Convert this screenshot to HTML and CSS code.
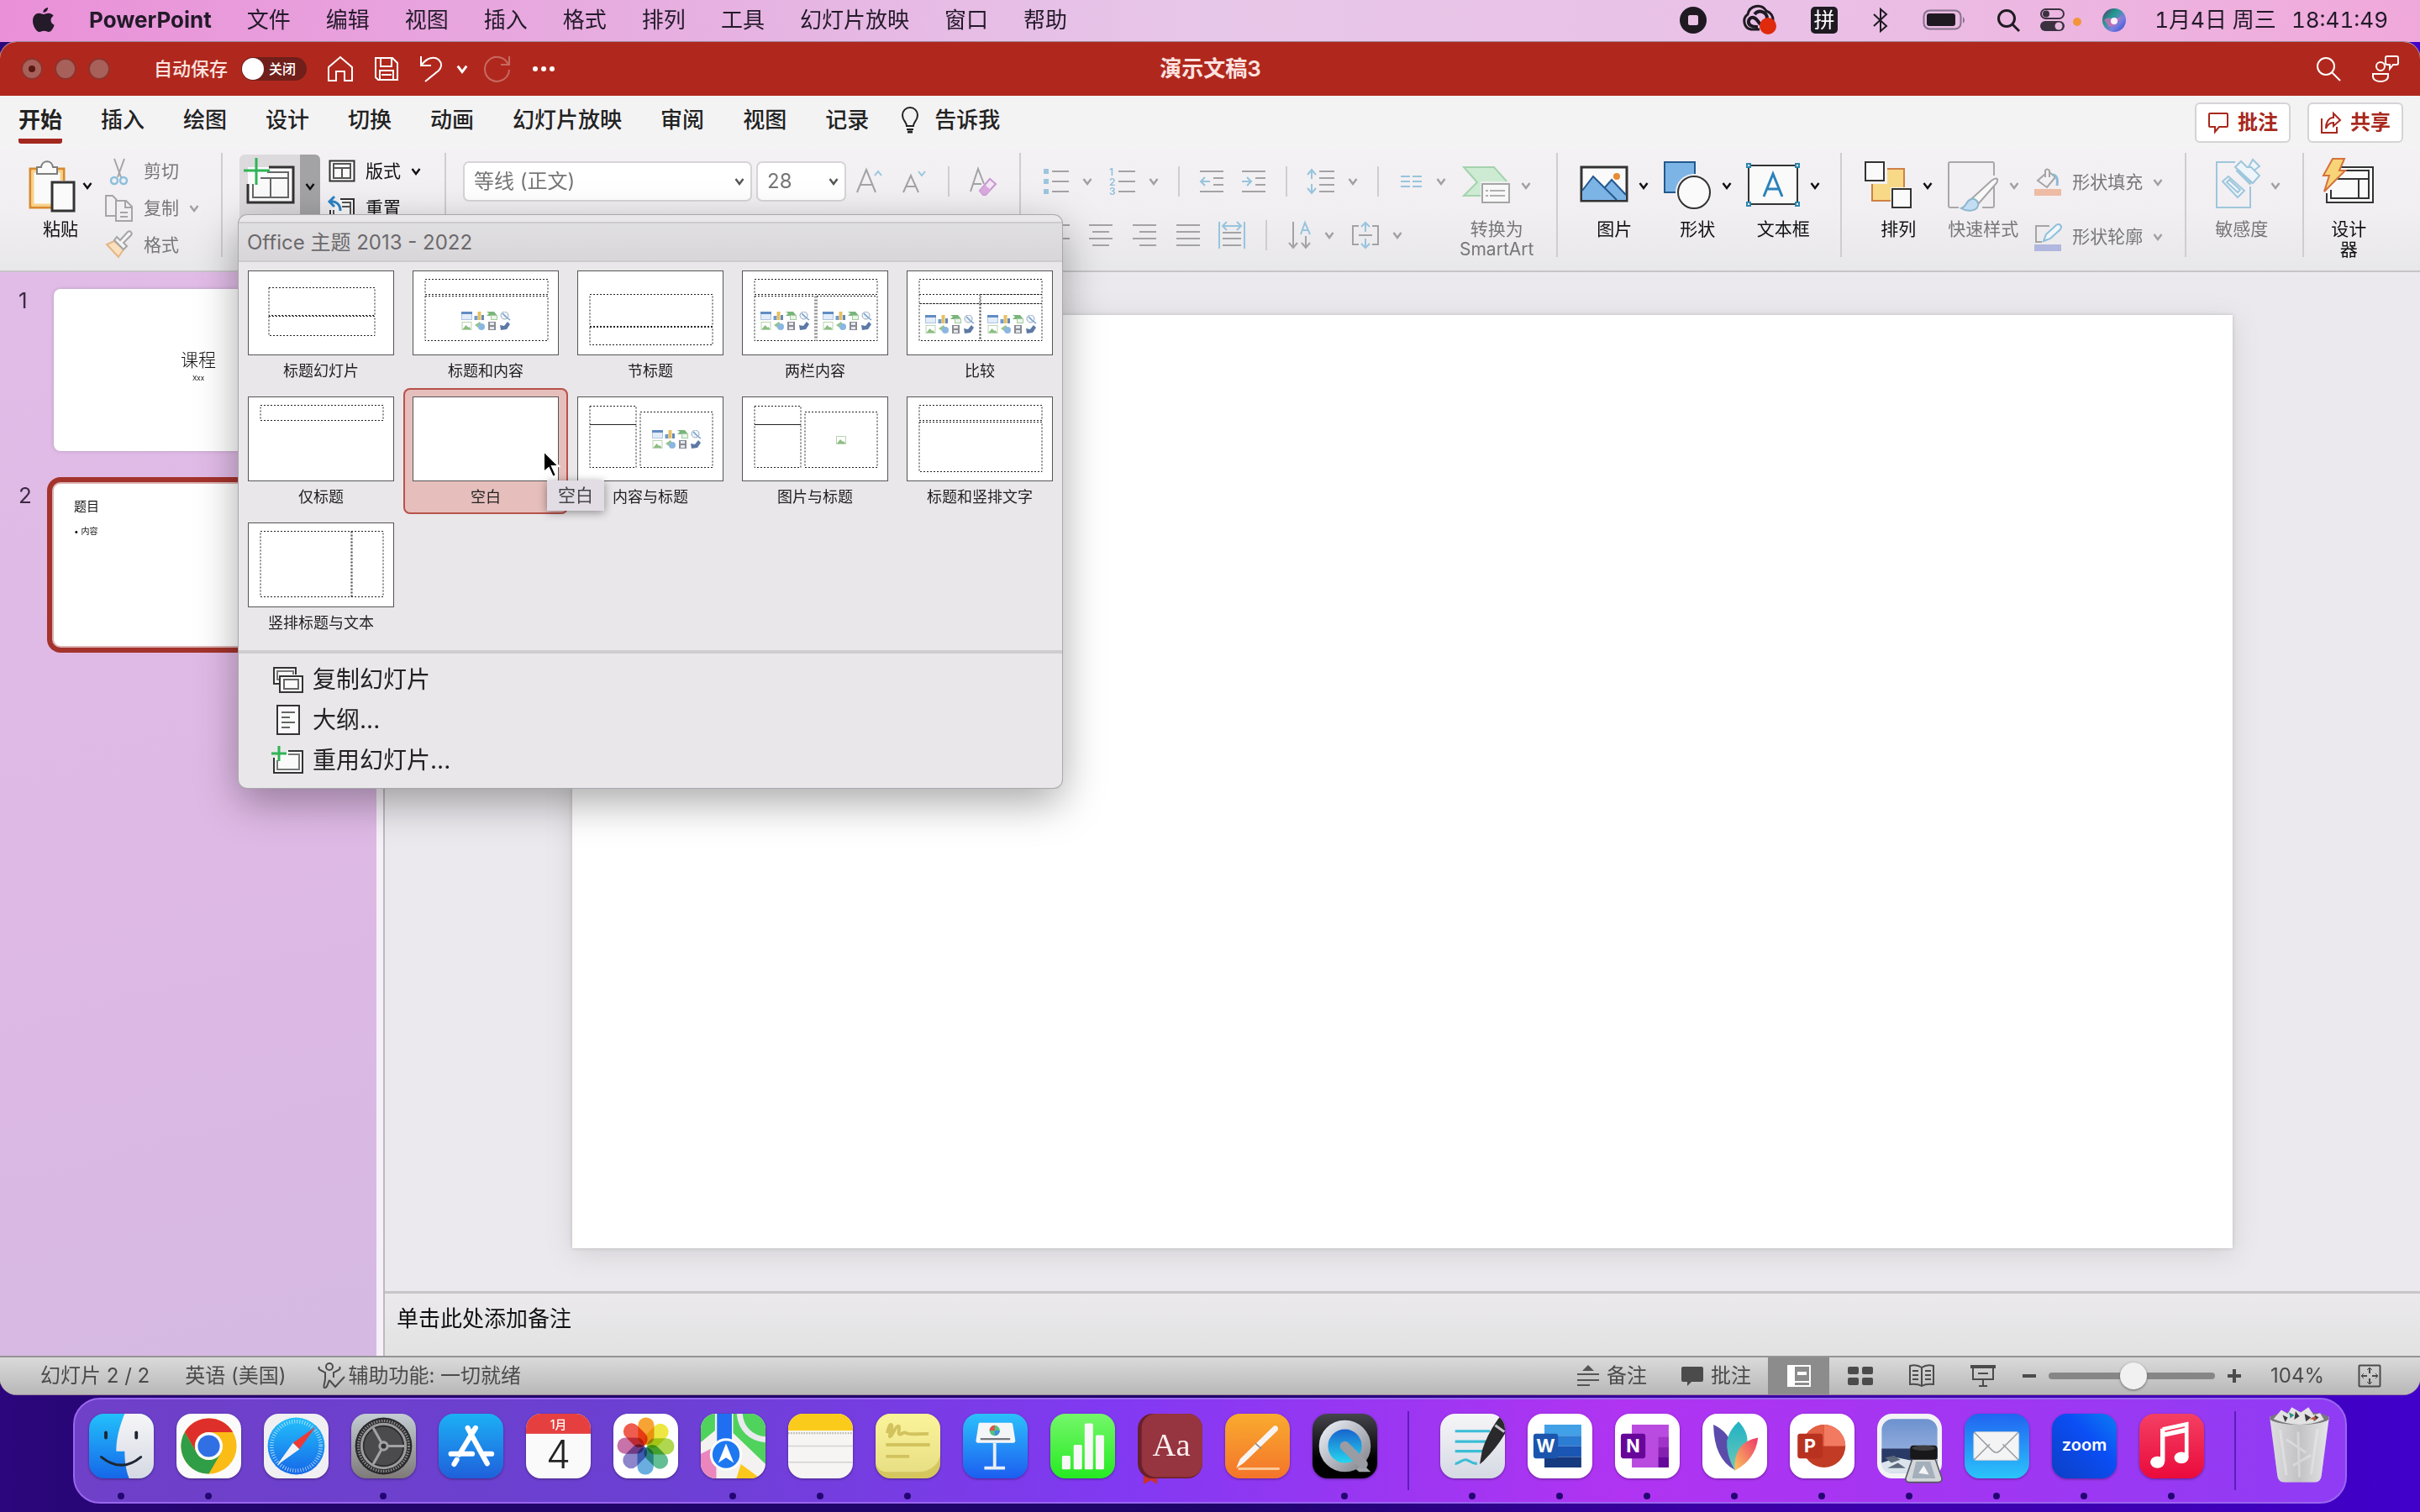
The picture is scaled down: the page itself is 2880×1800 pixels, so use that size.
FILE: index.html
```html
<!DOCTYPE html>
<html lang="zh-CN">
<head>
	<meta charset="UTF-8">
	<meta name="viewport" content="width=device-width, initial-scale=1.0">
	<title>演示文稿3</title>
	<link rel="stylesheet" href="styles.css">
</head>
<body>

<!-- shared symbols -->
<svg class="defs" width="0" height="0" aria-hidden="true">
	<symbol id="chev" viewBox="0 0 12 12"><path d="M1.500 3L6 9L10.500 3" fill="none" stroke="currentColor" stroke-width="2.500"/></symbol>
	<symbol id="pic" viewBox="0 0 12 10"><rect x=".5" y=".5" width="11" height="9" fill="#fff" stroke="#a9c9a0"/><path d="M1 9l4-5 3 3 1-1 2 3z" fill="#6fae63"/></symbol>
	<symbol id="media" viewBox="0 0 60 22">
		<rect x=".5" y=".5" width="12" height="9" fill="#dce9f8" stroke="#9db7d8"/><path d="M0 1.500h13" stroke="#3a70b4" stroke-width="3"/>
		<path d="M17.500 10V5" stroke="#4b80c4" stroke-width="4"/><path d="M21.500 10V0" stroke="#e2b13c" stroke-width="4"/><path d="M25.500 10V4" stroke="#3e6ea8" stroke-width="3"/>
		<path d="M30 0h9l4 5H30l3-3z" fill="#58a35b"/><rect x="35.500" y="4.500" width="7" height="5" fill="#e6f3e4" stroke="#8fbf8a"/>
		<circle cx="51.500" cy="4.500" r="4.500" fill="#edf3fa" stroke="#7f8ea5"/><path d="M49 2l5 5M54 7l4 3" stroke="#4c84c0" stroke-width="1.500"/>
		<use href="#pic" x="0" y="12" width="13" height="10"/>
		<path d="M16 16l6-4 3 5-5 2z" fill="#7cb56d"/><circle cx="24" cy="18" r="4" fill="#6ea6dc"/>
		<rect x="32" y="12" width="9" height="10" fill="#6d6f78"/><path d="M34 13h5v3h-5zM34 18h5v3h-5z" fill="#dfe3ea"/>
		<path d="M46 16l5 1 4-5 3 3-4 6-7 1z" fill="#35588f"/>
	</symbol>
</svg>

<header class="menubar">
	<svg class="apple" width="28" height="32" viewBox="0 0 28 32"><path d="M19 1c.3 3-2.500 6-5.500 6C13 4 16 1.300 19 1zM14 9c1.500 0 3-1.500 6-1.300 2.500.1 4.500 1.300 5.600 3-4.600 3-3.800 9 1 11C25.500 25.500 23 30 20 30c-2 0-3-1.200-5.500-1.200S11 30 9 30C5 30 1 22.500 1 17c0-6 3.500-9.300 7.500-9.300C11 7.700 12.500 9 14 9z" fill="#231a2a"/></svg>
	<nav class="menus">
		<a class="app-name" href="#">PowerPoint</a>
		<a href="#">文件</a><a href="#">编辑</a><a href="#">视图</a><a href="#">插入</a><a href="#">格式</a><a href="#">排列</a><a href="#">工具</a><a href="#">幻灯片放映</a><a href="#">窗口</a><a href="#">帮助</a>
	</nav>
	<div class="extras">
		<svg width="34" height="34" viewBox="0 0 34 34"><circle cx="17" cy="17" r="16" fill="#1f1a22"/><rect x="11" y="11" width="12" height="12" rx="2" fill="#eac2e6"/></svg>
		<svg width="42" height="34" viewBox="0 0 42 34"><g fill="none" stroke="#1f1a22" stroke-width="3"><path d="M22 28H12A10 10 0 0 1 8 10 12 12 0 0 1 30 6 11 11 0 0 1 38 18"/><path d="M20 25C4 26 8 12 15 14c4 1 5 5 8 8M16 10c6-7 15-2 15 5" stroke-width="4"/></g><circle cx="32" cy="24" r="10" fill="#df2a0c"/></svg>
		<svg width="34" height="34" viewBox="0 0 34 34"><rect x="1" y="1" width="32" height="32" rx="5" fill="#1f1a22"/><text x="17" y="26" font-size="25" text-anchor="middle" fill="#fff">拼</text></svg>
		<svg width="20" height="30" viewBox="0 0 20 30"><path d="M2 8l15 14-7 6V2l7 6L2 22" fill="none" stroke="#1f1a22" stroke-width="2"/></svg>
		<svg width="52" height="26" viewBox="0 0 52 26"><rect x="1.500" y="1.500" width="44" height="22" rx="7" fill="none" stroke="#86708b" stroke-width="2"/><rect x="5" y="5" width="34" height="15" rx="3" fill="#1f1a22"/><path d="M48 9q4 4 0 8z" fill="#86708b"/></svg>
		<div class="controls">
			<svg width="28" height="28" viewBox="0 0 28 28"><g fill="none" stroke="#1f1a22" stroke-width="3"><circle cx="12" cy="12" r="9.500"/><path d="M19 19l8 8"/></g></svg>
			<svg width="50" height="28" viewBox="0 0 50 28"><rect x="1" y="1" width="27" height="11" rx="5.500" fill="none" stroke="#3b3140" stroke-width="2"/><circle cx="7" cy="6.500" r="4" fill="#3b3140"/><rect x="0" y="15" width="29" height="12" rx="6" fill="#3b3140"/><circle cx="22" cy="21" r="4.500" fill="#e8badf"/><circle cx="44" cy="16" r="5" fill="#f2953a"/></svg>
			<svg width="28" height="28" viewBox="0 0 28 28"><defs><linearGradient id="siri" x1="0" y1="0" x2="1" y2="1"><stop offset="0" stop-color="#5c2b6e"/><stop offset=".35" stop-color="#1f9b8d"/><stop offset=".65" stop-color="#7c7fe0"/><stop offset="1" stop-color="#274ad0"/></linearGradient></defs><circle cx="14" cy="14" r="14" fill="url(#siri)"/><path d="M2 14c8-7 12 4 22-6-6 9-8 14-16 14z" fill="#e868b8" opacity=".7"/><circle cx="14" cy="15" r="4" fill="#fff" opacity=".9"/></svg>
		</div>
		<span class="clock"><span>1月4日 周三</span><span>18:41:49</span></span>
	</div>
</header>

<main class="window">
	<div class="titlebar">
		<div class="title-left">
			<span class="lights"><i class="dirty"></i><i></i><i></i></span>
			<label class="autosave">自动保存 <button class="toggle"><span>关闭</span></button></label>
			<button aria-label="主页"><svg width="32" height="32" viewBox="0 0 32 32"><path d="M2 14L16 2l14 12v16h-9V19h-10v11H2z" class="wl"/></svg></button>
			<button aria-label="保存"><svg width="30" height="30" viewBox="0 0 30 30"><path d="M2 2h20l6 6v20H5l-3-3zM8 2v10h13V2M7 28V17h16v11M9 22h12" class="wl"/></svg></button>
			<button class="undo" aria-label="撤消"><svg width="28" height="32" viewBox="0 0 28 32"><path d="M2 1v11h12M2 12C9 2 18 1 23 5c5 5 3 10 0 13L7 31" class="wl"/></svg><svg class="chev" width="14" height="14"><use href="#chev"/></svg></button>
			<button class="faded" aria-label="重复"><svg width="34" height="34" viewBox="0 0 34 34"><path d="M31 2v10H21M30 12A14.500 14.500 0 1 0 31 18" class="wl"/></svg></button>
			<button aria-label="更多"><svg width="28" height="8" viewBox="0 0 28 8"><g fill="#fff"><circle cx="4" cy="4" r="3"/><circle cx="14" cy="4" r="3"/><circle cx="24" cy="4" r="3"/></g></svg></button>
		</div>
		<h1>演示文稿3</h1>
		<div class="title-right">
			<button aria-label="搜索"><svg width="30" height="30" viewBox="0 0 30 30"><circle cx="12" cy="12" r="10" class="wl"/><path d="M19 19l10 10" class="wl"/></svg></button>
			<button aria-label="联系人"><svg width="34" height="34" viewBox="0 0 34 34"><circle cx="11" cy="14" r="5" class="wl"/><path d="M2 23h18v3c0 8-18 8-18 0zM19 2h11q2 0 2 2v6q0 2-2 2h-4l-4 5v-5h-3q-2 0-2-2V4q0-2 2-2z" class="wl"/></svg></button>
		</div>
	</div>

	<div class="tabs">
		<nav>
			<a class="active" href="#">开始</a><a href="#">插入</a><a href="#">绘图</a><a href="#">设计</a><a href="#">切换</a><a href="#">动画</a><a href="#">幻灯片放映</a><a href="#">审阅</a><a href="#">视图</a><a href="#">记录</a>
			<a class="tell" href="#"><svg width="22" height="32" viewBox="0 0 22 32"><path d="M7 23c0-5-5-6-5-13a9 9 0 0 1 18 0c0 7-5 8-5 13zM7 27h8" fill="none" stroke="#222" stroke-width="2"/><path d="M8 30h6" stroke="#222" stroke-width="3"/></svg>告诉我</a>
		</nav>
		<div class="tab-actions">
			<button><svg width="26" height="26" viewBox="0 0 26 26"><path d="M3 2h20q1 0 1 1v14q0 1-1 1H14l-5 6v-6H3q-1 0-1-1V3q0-1 1-1z" fill="none" stroke="#a8281d" stroke-width="2"/></svg>批注</button>
			<button><svg width="26" height="26" viewBox="0 0 26 26"><path d="M2 8v17h18v-7M16 2l8 8-8 7v-4c-4 0-7 2-9 7 0-7 3-13 9-13z" fill="none" stroke="#a8281d" stroke-width="2"/></svg>共享</button>
		</div>
	</div>

	<div class="ribbon">
		<section class="group g-clip">
			<button class="big"><span class="face"><svg width="56" height="64" viewBox="0 0 56 64"><path d="M1.500 12h40v16H28v31H1.500z" fill="#fafafa"/><path d="M42 27V13H2v46h26" fill="none" stroke="#d98a2c" stroke-width="3"/><path d="M39 27V16H5v40h23" fill="none" stroke="#f7d28a" stroke-width="3"/><path d="M10 19v-8h5c1-9 13-9 14 0h5v8z" fill="#fafafa" stroke="#7d7d7d" stroke-width="2"/><rect x="28" y="29" width="26" height="34" fill="#fafafa" stroke="#333" stroke-width="3"/></svg><svg class="chev" width="12" height="12"><use href="#chev"/></svg></span>粘贴</button>
			<div class="stack three off">
				<button><svg width="34" height="34" viewBox="0 0 34 34"><path d="M11 2l8 22M23 2l-8 22" fill="none" stroke="#a5a5a5" stroke-width="2"/><g fill="none" stroke="#8cbfdc" stroke-width="2.500"><circle cx="11" cy="28" r="4"/><circle cx="22" cy="28" r="4"/></g></svg>剪切</button>
				<button><svg width="34" height="34" viewBox="0 0 34 34"><path d="M12 26H1V2h8l5 5M13 8h12l7 7v17H13zM24 8v8h8M18 22h9M18 27h9" fill="none" stroke="#a5a5a5" stroke-width="2"/></svg>复制<svg class="chev" width="12" height="12"><use href="#chev"/></svg></button>
				<button><svg width="34" height="34" viewBox="0 0 34 34"><path d="M2 16l14 15 6-9-11-10z" fill="#fbe0bd" stroke="#e4b586" stroke-width="2"/><path d="M11 11l11 11 4-4-4-4 9-9c2-3-1-6-4-4l-9 10-4-4z" fill="#f4f4f4" stroke="#a5a5a5" stroke-width="2"/></svg>格式</button>
			</div>
		</section>

		<section class="group g-slides">
			<div class="split">
				<button class="main" aria-label="新建幻灯片"><svg width="62" height="56" viewBox="0 0 62 56"><rect x="5" y="11" width="54" height="42" fill="#fafafa"/><path d="M30 11h29v42H5V31" fill="none" stroke="#333" stroke-width="3"/><path d="M28 17h25v7M20 24h33v23H11V31M32 24v23" fill="none" stroke="#666" stroke-width="2"/><path d="M15 0v32M0 15h31" stroke="#2fb457" stroke-width="3"/></svg></button>
				<button class="drop" aria-label="版式列表"><svg class="chev" width="12" height="12"><use href="#chev"/></svg></button>
			</div>
			<div class="stack three">
				<button><svg width="32" height="28" viewBox="0 0 32 28"><rect x="1.500" y="1.500" width="29" height="24" fill="#fafafa" stroke="#333" stroke-width="2"/><path d="M6 5h20v17H6zM6 10h20M16 10v12" fill="none" stroke="#555" stroke-width="2"/></svg>版式<svg class="chev" width="12" height="12"><use href="#chev"/></svg></button>
				<button><svg width="32" height="28" viewBox="0 0 32 28"><path d="M14 3h16v23H2V16" fill="#fafafa" stroke="#333" stroke-width="2"/><path d="M16 7h10v15H6v-6M16 12h10" fill="none" stroke="#555" stroke-width="2"/><path d="M7 0L1 6l6 6M1 6c8-1 13 3 13 11" fill="none" stroke="#2b82c4" stroke-width="3"/></svg>重置</button>
			</div>
		</section>

		<section class="group g-font off">
			<label class="pick family"><select aria-label="字体"><option>等线 (正文)</option></select><svg class="chev dark" width="12" height="12"><use href="#chev"/></svg></label>
			<label class="pick size"><select aria-label="字号"><option>28</option></select><svg class="chev dark" width="12" height="12"><use href="#chev"/></svg></label>
			<div class="tools">
				<button aria-label="增大字号"><svg width="34" height="34" viewBox="0 0 34 34"><path d="M3 30L14 3l11 27M7 21h14" class="gl"/><path d="M24 10l4-5 4 5" class="bl"/></svg></button>
				<button aria-label="减小字号"><svg width="34" height="34" viewBox="0 0 34 34"><path d="M4 30L13 10l9 20M7 23h12" class="gl"/><path d="M22 5l4 5 4-5" class="bl"/></svg></button>
				<i class="bar"></i>
				<button aria-label="清除格式"><svg width="34" height="36" viewBox="0 0 34 36"><path d="M2 30L11 3l7 18M5 21h10" class="gl"/><path d="M13 29L25 15l7 6-12 13h-3z" fill="#f5e6f7" stroke="#c998d2" stroke-width="2"/><path d="M13 29l6-7 7 6-6 6h-3z" fill="#d9a9e0"/></svg></button>
			</div>
		</section>

		<section class="group g-para off">
			<div class="rows">
				<div class="tools">
					<button aria-label="项目符号"><svg width="32" height="32" viewBox="0 0 32 32"><path d="M1 4h6M1 16h6M1 28h6" stroke="#9cc6de" stroke-width="6"/><path d="M11 4h20M11 16h20M11 28h20" class="gl"/></svg><svg class="chev" width="12" height="12"><use href="#chev"/></svg></button>
					<button aria-label="编号"><svg width="32" height="32" viewBox="0 0 32 32"><g font-size="12" font-weight="600" fill="#8fbfdb"><text x="0" y="9">1</text><text x="0" y="21">2</text><text x="0" y="32">3</text></g><path d="M11 4h20M11 16h20M11 28h20" class="gl"/></svg><svg class="chev" width="12" height="12"><use href="#chev"/></svg></button>
					<i class="bar"></i>
					<button aria-label="减少缩进"><svg width="30" height="30" viewBox="0 0 30 30"><path d="M1 3h28M17 11h12M17 19h12M1 27h28" class="gl"/><path d="M13 15H2M7 10l-5 5 5 5" class="bl"/></svg></button>
					<button aria-label="增加缩进"><svg width="30" height="30" viewBox="0 0 30 30"><path d="M1 3h28M17 11h12M17 19h12M1 27h28" class="gl"/><path d="M1 15h11M7 10l5 5-5 5" class="bl"/></svg></button>
					<i class="bar"></i>
					<button aria-label="行距"><svg width="34" height="32" viewBox="0 0 34 32"><path d="M15 4h18M15 12h18M15 20h18M15 28h18" class="gl"/><path d="M6 2v11M6 19v11M1 8l5-6 5 6M1 24l5 6 5-6" class="bl"/></svg><svg class="chev" width="12" height="12"><use href="#chev"/></svg></button>
					<i class="bar"></i>
					<button aria-label="分栏"><svg width="30" height="20" viewBox="0 0 30 20"><path d="M3 4h11M3 10h11M3 16h11M17 4h11M17 10h11M17 16h11" class="bl"/></svg><svg class="chev" width="12" height="12"><use href="#chev"/></svg></button>
				</div>
				<div class="tools">
					<button aria-label="左对齐"><svg width="32" height="30" viewBox="0 0 32 30"><path d="M3 3h29M3 11h20M3 19h29M3 27h20" class="gl"/></svg></button>
					<button aria-label="居中"><svg width="32" height="30" viewBox="0 0 32 30"><path d="M3 3h28M7 11h20M3 19h28M7 27h20" class="gl"/></svg></button>
					<button aria-label="右对齐"><svg width="32" height="30" viewBox="0 0 32 30"><path d="M3 3h28M11 11h20M3 19h28M11 27h20" class="gl"/></svg></button>
					<button aria-label="两端对齐"><svg width="32" height="30" viewBox="0 0 32 30"><path d="M3 3h28M3 11h28M3 19h28M3 27h28" class="gl"/></svg></button>
					<button aria-label="分散对齐"><svg width="34" height="34" viewBox="0 0 34 34"><path d="M6 14h22M6 21h22M6 29h22" class="gl"/><path d="M2 1v32M32 1v32M7 6h20M11 1L6 6l5 5M23 1l5 5-5 5" class="bl"/></svg></button>
					<i class="bar"></i>
					<button aria-label="文字方向"><svg width="30" height="34" viewBox="0 0 30 34"><path d="M8 1v30M3 26l5 6 5-6M23 18v13M18 26l5 6 5-6" class="gl"/><path d="M17 16l5-14 6 14M19 11h7" class="bl"/></svg><svg class="chev" width="12" height="12"><use href="#chev"/></svg></button>
					<button aria-label="对齐文本"><svg width="34" height="34" viewBox="0 0 34 34"><path d="M9 6H2v22h7M25 6h7v22h-7M9 17h16" class="gl"/><path d="M17 2v11M17 21v11M12 7l5-5 5 5M12 27l5 5 5-5" class="bl"/></svg><svg class="chev" width="12" height="12"><use href="#chev"/></svg></button>
				</div>
			</div>
			<button class="big"><span class="face"><svg width="58" height="64" viewBox="0 0 58 64"><path d="M2 11h36l16 18-14 16H2l16-16z" fill="#cdebd3" stroke="#a3d3ac" stroke-width="2"/><rect x="22" y="28" width="35" height="26" fill="#f0f0f0"/><rect x="24" y="31" width="32" height="22" fill="#f8f8f8" stroke="#a5a5a5" stroke-width="2"/><path d="M28 39h3M28 45h3M33 39h18M33 45h18" stroke="#b0b0b0" stroke-width="2"/></svg><svg class="chev" width="12" height="12"><use href="#chev"/></svg></span>转换为<br>SmartArt</button>
		</section>

		<section class="group g-insert">
			<button class="big"><span class="face"><svg width="58" height="64" viewBox="0 0 58 64"><rect x="2" y="11" width="54" height="40" fill="#fafafa" stroke="#333" stroke-width="3"/><path d="M3 39l13-17 28 28H3z" fill="#7db4e6"/><path d="M30 35l8-9 17 18v6H44z" fill="#7db4e6"/><path d="M3 39l13-17 28 28M30 35l8-9 17 18" fill="none" stroke="#23598f" stroke-width="2"/><circle cx="44" cy="22" r="4" fill="#e98a35"/></svg><svg class="chev" width="12" height="12"><use href="#chev"/></svg></span>图片</button>
			<button class="big"><span class="face"><svg width="58" height="64" viewBox="0 0 58 64"><rect x="2" y="5" width="36" height="36" fill="#7db4e6" stroke="#23598f" stroke-width="2"/><circle cx="37" cy="41" r="22" fill="#f2f1f3"/><circle cx="37" cy="41" r="19" fill="#fafafa" stroke="#333" stroke-width="2"/></svg><svg class="chev" width="12" height="12"><use href="#chev"/></svg></span>形状</button>
			<button class="big"><span class="face"><svg width="64" height="64" viewBox="0 0 64 64"><rect x="3" y="9" width="58" height="46" fill="#fafafa" stroke="#333" stroke-width="2"/><g fill="#fff" stroke="#2b86ad" stroke-width="2"><rect x="1" y="7" width="4" height="4"/><rect x="59" y="7" width="4" height="4"/><rect x="1" y="53" width="4" height="4"/><rect x="59" y="53" width="4" height="4"/></g><path d="M21 46L32 19l11 27M25 37h14" fill="none" stroke="#2b82b9" stroke-width="3"/></svg><svg class="chev" width="12" height="12"><use href="#chev"/></svg></span>文本框</button>
		</section>

		<section class="group">
			<button class="big"><span class="face"><svg width="58" height="64" viewBox="0 0 58 64"><rect x="10" y="13" width="38" height="38" fill="#f8d987" stroke="#cf8145" stroke-width="2"/><path d="M0 3h28v28H0zM32 35h26v26H32z" fill="#f2f1f3"/><rect x="2" y="5" width="22" height="22" fill="#fafafa" stroke="#333" stroke-width="2"/><rect x="34" y="37" width="22" height="22" fill="#fafafa" stroke="#333" stroke-width="2"/></svg><svg class="chev" width="12" height="12"><use href="#chev"/></svg></span>排列</button>
			<button class="big off"><span class="face"><svg width="62" height="64" viewBox="0 0 62 64"><path d="M14 59H4q-2 0-2-2V7q0-2 2-2h50q2 0 2 2v14M56 34v23q0 2-2 2H42" fill="none" stroke="#a8a8a8" stroke-width="2"/><path d="M29 49l24-22c6-4 9-3 6 3L38 54z" fill="#f8f8f8" stroke="#a5a5a5" stroke-width="2"/><path d="M29 49c5-1 9 3 8 8-2 6-12 8-20 3 7-2 5-9 12-11z" fill="#c3def2" stroke="#8fb6cf" stroke-width="2"/></svg><svg class="chev" width="12" height="12"><use href="#chev"/></svg></span>快速样式</button>
			<div class="stack two off">
				<button><svg width="34" height="34" viewBox="0 0 34 34"><path d="M14 7L5 15l11 8 10-12-7-6M14 11V3q2-3 5 0v8" fill="none" stroke="#a5a5a5" stroke-width="2"/><path d="M23 8q7 1 5 13" fill="none" stroke="#8fbad6" stroke-width="3"/><path d="M1 25h32v8H1z" fill="#eebba5"/></svg>形状填充<svg class="chev" width="12" height="12"><use href="#chev"/></svg></button>
				<button><svg width="34" height="34" viewBox="0 0 34 34"><path d="M19 4H3v19h7" fill="none" stroke="#a5a5a5" stroke-width="2"/><path d="M12 22l3-8L27 3q3-2 5 0t0 5L20 19z" fill="#f1f6fa" stroke="#8cbfdc" stroke-width="2"/><path d="M1 26h32v8H1z" fill="#b1b7de"/></svg>形状轮廓<svg class="chev" width="12" height="12"><use href="#chev"/></svg></button>
			</div>
		</section>

		<section class="group g-sens off">
			<button class="big"><span class="face"><svg width="54" height="64" viewBox="0 0 54 64"><path d="M24 5H2v54h40V34" fill="none" stroke="#9fc6dc" stroke-width="2"/><g fill="#eef5fa" stroke="#9fc6dc" stroke-width="2"><path d="M9 28l7-6 19 17-8 8zM14 29l3-3 13 12-3 3z"/><path d="M40 11l5-9 8 8-8 6z"/><path d="M24 11l7-7 7 7h5l10 10-8 9z"/></g><path d="M26 14l17 17" stroke="#9fc6dc" stroke-width="4"/></svg><svg class="chev" width="12" height="12"><use href="#chev"/></svg></span>敏感度</button>
		</section>

		<section class="group g-design">
			<button class="big"><span class="face"><svg width="62" height="64" viewBox="0 0 62 64"><path d="M22 11h38v42H5V42" fill="#fafafa" stroke="#333" stroke-width="2"/><path d="M24 15h31v33H10V38M18 25h37M43 25v23" fill="none" stroke="#333" stroke-width="2"/><path d="M12 1h14l-6 14h7L2 40l6-19H1z" fill="#f8d478" stroke="#d5713c" stroke-width="2"/></svg></span>设计<br>器</button>
		</section>
	</div>

	<div class="workspace">
		<aside class="slides">
			<div class="slide-row"><span>1</span><div class="thumb cover"><b>课程</b><small>Xxx</small></div></div>
			<div class="slide-row"><span>2</span><div class="thumb body current"><b>题目</b><small>• 内容</small></div></div>
		</aside>
		<div class="editor">
			<div class="canvas"><div class="page"></div></div>
			<textarea class="notes" aria-label="备注" placeholder="单击此处添加备注"></textarea>
		</div>
	</div>

	<footer class="status">
		<span>幻灯片 2 / 2</span>
		<button class="lang">英语 (美国)</button>
		<button class="access"><svg width="34" height="32" viewBox="0 0 34 32"><g fill="none" stroke="#4b4b4b" stroke-width="2"><circle cx="14" cy="5" r="4"/><path d="M2 5c-2 3 1 4 7 7v7c0 5-3 10-1 11 4 1 4-6 6-9M26 5c2 3-1 4-7 7v6M14 21l7 8 11-12"/></g></svg>辅助功能: 一切就绪</button>
		<div class="views">
			<button><svg width="28" height="28" viewBox="0 0 28 28"><path d="M14 1l7 7H7z" fill="#555"/><path d="M1 12h26M1 19h26M1 25h15" stroke="#555" stroke-width="2"/></svg>备注</button>
			<button><svg width="28" height="28" viewBox="0 0 28 28"><path d="M3 3h22q2 0 2 2v14q0 2-2 2H13l-5 5v-5H3q-2 0-2-2V5q0-2 2-2z" fill="#4b4b4b"/></svg>批注</button>
			<div class="modes">
				<button class="on" aria-label="普通视图"><svg width="28" height="28" viewBox="0 0 28 28"><path d="M1 1h8v26H1z" fill="#fff"/><path d="M1 2h26v24H1zM9 21h18" fill="none" stroke="#fff" stroke-width="2"/><path d="M12 9h11v4H12z" fill="#fff"/></svg></button>
				<button aria-label="幻灯片浏览"><svg width="32" height="26" viewBox="0 0 32 26"><g fill="#4b4b4b"><rect x="1" y="2" width="13" height="9" rx="2"/><rect x="18" y="2" width="13" height="9" rx="2"/><rect x="1" y="15" width="13" height="9" rx="2"/><rect x="18" y="15" width="13" height="9" rx="2"/></g></svg></button>
				<button aria-label="阅读视图"><svg width="32" height="28" viewBox="0 0 32 28"><path d="M16 4Q10 0 2 2v22q9-1 14 2 5-3 14-2V2q-8-2-14 2zv22M5 8h7M5 13h7M5 18h7M20 8h7M20 13h7M20 18h7" fill="none" stroke="#4b4b4b" stroke-width="2"/></svg></button>
				<button aria-label="幻灯片放映"><svg width="32" height="28" viewBox="0 0 32 28"><path d="M1 3h30" stroke="#4b4b4b" stroke-width="4"/><path d="M4 4v14h24V4M10 11h12M16 18v8M11 26h10" fill="none" stroke="#4b4b4b" stroke-width="2"/></svg></button>
			</div>
			<button class="zoom-step" aria-label="缩小"><svg width="18" height="18" viewBox="0 0 18 18"><path d="M1 9h16" stroke="#4b4b4b" stroke-width="4"/></svg></button>
			<input type="range" min="0" max="100" value="51" aria-label="显示比例">
			<button class="zoom-step" aria-label="放大"><svg width="18" height="18" viewBox="0 0 18 18"><path d="M1 9h16M9 1v16" stroke="#4b4b4b" stroke-width="4"/></svg></button>
			<button class="percent">104%</button>
			<button aria-label="适应窗口"><svg width="28" height="28" viewBox="0 0 28 28"><rect x="1.500" y="1.500" width="25" height="25" rx="1" fill="none" stroke="#4b4b4b" stroke-width="2"/><path d="M14 4v7M14 17v7M4 14h7M17 14h7" stroke="#4b4b4b" stroke-width="2"/><path d="M11 7l3-3 3 3M11 21l3 3 3-3M7 11l-3 3 3 3M21 11l3 3-3 3" fill="none" stroke="#4b4b4b"/></svg></button>
		</div>
	</footer>

	<!-- new slide gallery -->
	<div class="popover">
		<h2>Office 主题 2013 - 2022</h2>
		<div class="gallery">
			<button><svg viewBox="0 0 174 101"><path d="M25 20.500h126v33H25zM25 54.500h126v23H25z"/></svg>标题幻灯片</button>
			<button><svg viewBox="0 0 174 101"><path d="M15 10.500h146v18H15zM15 30.500h146v53H15z"/><use href="#media" x="58" y="49" width="60" height="22"/></svg>标题和内容</button>
			<button><svg viewBox="0 0 174 101"><path d="M15 28.500h146v38H15zM15 67.500h146v21H15z"/></svg>节标题</button>
			<button><svg viewBox="0 0 174 101"><path d="M15 10.500h146v18H15zM15 30.500h72v53H15zM89 30.500h72v53H89z"/><use href="#media" x="22" y="49" width="60" height="22"/><use href="#media" x="96" y="49" width="60" height="22"/></svg>两栏内容</button>
			<button><svg viewBox="0 0 174 101"><path d="M15 10.500h146v18H15zM15 28.500h72v11H15zM88 28.500h73v11H88zM15 39.500h72v44H15zM88 39.500h73v44H88z"/><use href="#media" x="22" y="53" width="60" height="22"/><use href="#media" x="96" y="53" width="60" height="22"/></svg>比较</button>
			<button><svg viewBox="0 0 174 101"><path d="M15 10.500h146v18H15z"/></svg>仅标题</button>
			<button class="hover"><svg viewBox="0 0 174 101"></svg>空白
				<span class="tip">空白</span>
				<span class="cursor"><svg viewBox="0 0 22 34"><path d="M2 2v25l6-5 5 11 4-2-5-11h8z" fill="#000" stroke="#fff" stroke-width="2"/></svg></span>
			</button>
			<button><svg viewBox="0 0 174 101"><path d="M15 11.500h55v22H15zM15 33.500h55v51H15zM75 18.500h86v66H75z"/><use href="#media" x="89" y="40" width="60" height="22"/></svg>内容与标题</button>
			<button><svg viewBox="0 0 174 101"><path d="M15 11.500h55v22H15zM15 33.500h55v51H15zM75 18.500h86v66H75z"/><use href="#pic" x="112" y="47" width="12" height="10"/></svg>图片与标题</button>
			<button><svg viewBox="0 0 174 101"><path d="M15 10.500h146v18H15zM15 30.500h146v59H15z"/></svg>标题和竖排文字</button>
			<button><svg viewBox="0 0 174 101"><path d="M15 10.500h146v78H15zM123 10.500v78M124 10.500v78"/></svg>竖排标题与文本</button>
		</div>
		<div class="commands">
			<button><svg width="38" height="38" viewBox="0 0 38 38"><path d="M8 24H2V5h26v8" fill="#fafafa" stroke="#333" stroke-width="2"/><path d="M8 19H6V9h19v4" fill="none" stroke="#777" stroke-width="2"/><rect x="9" y="15" width="27" height="19" fill="#fafafa" stroke="#333" stroke-width="2"/><rect x="14" y="19" width="17" height="11" fill="none" stroke="#666" stroke-width="2"/></svg>复制幻灯片</button>
			<button><svg width="38" height="38" viewBox="0 0 38 38"><rect x="6" y="2" width="26" height="34" fill="#fafafa" stroke="#333" stroke-width="2"/><path d="M11 10h16M11 16h10M11 22h16M11 28h10" stroke="#666" stroke-width="2"/></svg>大纲...</button>
			<button><svg width="38" height="38" viewBox="0 0 38 38"><path d="M19 8h17v26H2V16" fill="#fafafa" stroke="#333" stroke-width="2"/><path d="M19 12h13v18H6V19" fill="none" stroke="#777" stroke-width="2"/><path d="M8 2v18M-1 11h18" stroke="#2fb457" stroke-width="3"/></svg>重用幻灯片...</button>
		</div>
	</div>
</main>

<footer class="dock">
	<svg class="defs" width="0" height="0" aria-hidden="true"><defs>
		<linearGradient id="gBlue" x2="0" y2="1"><stop stop-color="#22c0fb"/><stop offset="1" stop-color="#1667e8"/></linearGradient>
		<linearGradient id="gSil" x2="0" y2="1"><stop stop-color="#f6f6f8"/><stop offset="1" stop-color="#d5d9e3"/></linearGradient>
		<linearGradient id="gGear" x2="0" y2="1"><stop stop-color="#c3cdd3"/><stop offset="1" stop-color="#7e7a78"/></linearGradient>
		<linearGradient id="gStore" x2="0" y2="1"><stop stop-color="#1cb0f5"/><stop offset="1" stop-color="#1f60db"/></linearGradient>
		<linearGradient id="gKey" x2="0" y2="1"><stop stop-color="#2cc0fc"/><stop offset="1" stop-color="#1c5ef0"/></linearGradient>
		<linearGradient id="gNum" x2="0" y2="1"><stop stop-color="#74f76a"/><stop offset="1" stop-color="#26ea22"/></linearGradient>
		<linearGradient id="gPages" x2="0" y2="1"><stop stop-color="#f9ab2f"/><stop offset="1" stop-color="#f4742a"/></linearGradient>
		<linearGradient id="gQt" x2="0" y2="1"><stop stop-color="#45454d"/><stop offset=".7" stop-color="#000"/></linearGradient>
		<linearGradient id="gRing" x2="1" y2="1"><stop stop-color="#e8ecf5"/><stop offset="1" stop-color="#85878f"/></linearGradient>
		<linearGradient id="gCyan" x2="0" y2="1"><stop stop-color="#1755c9"/><stop offset="1" stop-color="#27e5f4"/></linearGradient>
		<linearGradient id="gMail" x2="0" y2="1"><stop stop-color="#2164f2"/><stop offset="1" stop-color="#2bc4fa"/></linearGradient>
		<linearGradient id="gZoom" x1="1" x2="0" y2="1"><stop stop-color="#0c7cf5"/><stop offset=".4" stop-color="#0b4ef4"/><stop offset="1" stop-color="#0c3fc4"/></linearGradient>
		<linearGradient id="gMusic" x2="0" y2="1"><stop stop-color="#f44062"/><stop offset="1" stop-color="#ea0a3c"/></linearGradient>
		<linearGradient id="gSticky" x2="0" y2="1"><stop stop-color="#fcf49a"/><stop offset="1" stop-color="#e8df85"/></linearGradient>
		<linearGradient id="gTrash" x2="1"><stop stop-color="#dededf"/><stop offset=".5" stop-color="#c2c2c5"/><stop offset="1" stop-color="#e6e6e9"/></linearGradient>
		<linearGradient id="gLeaf" x2="0" y2="1"><stop stop-color="#1fb2c4"/><stop offset="1" stop-color="#6cc9b8"/></linearGradient>
		<linearGradient id="gLeaf2" x1="1" x2="0" y2="1"><stop stop-color="#ee3668"/><stop offset="1" stop-color="#f9c65e"/></linearGradient>
		<linearGradient id="gSky" x2="0" y2="1"><stop stop-color="#6d92cf"/><stop offset="1" stop-color="#a9bde6"/></linearGradient>
	</defs></svg>

	<a class="app run" href="#" title="访达"><svg viewBox="0 0 100 100"><rect width="100" height="100" fill="url(#gBlue)"/><path d="M55 0C46 22 42 40 42 58h13c0 15 2 30 7 42h38V0z" fill="url(#gSil)"/><path d="M26 29v8M73 29v8" stroke="#1c2733" stroke-width="5" stroke-linecap="round"/><path d="M19 67q31 25 61 0" fill="none" stroke="#1c2733" stroke-width="4" stroke-linecap="round"/></svg></a>
	<a class="app run" href="#" title="Chrome"><svg viewBox="0 0 100 100"><rect width="100" height="100" fill="#fbfbfc"/><circle cx="50" cy="50" r="43" fill="#fbbc16"/><path d="M12.800 28.500A43 43 0 0 1 87.200 28.500H50A21.500 21.500 0 0 0 31.400 60.800z" fill="#df2f2b"/><path d="M12.800 28.500A43 43 0 0 0 50 93l18.600-32.200a21.500 21.500 0 0 1-37.200 0z" fill="#2f9e47"/><circle cx="50" cy="50" r="21.500" fill="#fff"/><circle cx="50" cy="50" r="17" fill="#3170e4"/></svg></a>
	<a class="app" href="#" title="Safari"><svg viewBox="0 0 100 100"><rect width="100" height="100" fill="#f0f0f2"/><circle cx="50" cy="50" r="44" fill="url(#gBlue)"/><circle cx="50" cy="50" r="38" fill="none" stroke="#cfe9fb" stroke-width="6" stroke-dasharray="1 3"/><path d="M80 20L45 45l10 10z" fill="#ee3a35"/><path d="M20 80l35-25-10-10z" fill="#f3f3f5"/></svg></a>
	<a class="app run" href="#" title="系统偏好设置"><svg viewBox="0 0 100 100"><rect width="100" height="100" fill="url(#gGear)"/><circle cx="50" cy="50" r="44" fill="#2a2a2c"/><circle cx="50" cy="50" r="39" fill="none" stroke="#8a8a8c" stroke-width="4" stroke-dasharray="2 2"/><circle cx="50" cy="50" r="34" fill="none" stroke="#9c9c9e" stroke-width="4"/><circle cx="50" cy="50" r="30" fill="#4b4b4e"/><g fill="none" stroke="#a3a3a5" stroke-width="4"><circle cx="50" cy="50" r="6" fill="#333"/><path d="M56 50h26M47 45L34 22M47 55L34 78"/></g></svg></a>
	<a class="app" href="#" title="App Store"><svg viewBox="0 0 100 100"><rect width="100" height="100" fill="url(#gStore)"/><path d="M57 22L32 63M45 22l30 55M19 62h33M67 62h15M28 71l-4 7" fill="none" stroke="#fff" stroke-width="8" stroke-linecap="round"/></svg></a>
	<a class="app" href="#" title="日历"><svg viewBox="0 0 100 100"><rect width="100" height="100" fill="#fbfafa"/><rect width="100" height="31" fill="#e5403f"/><text x="50" y="23" font-size="18" font-weight="500" text-anchor="middle" fill="#fff">1月</text><text x="50" y="84" font-size="60" font-weight="300" text-anchor="middle" fill="#222">4</text></svg></a>
	<a class="app" href="#" title="照片"><svg viewBox="0 0 100 100"><rect width="100" height="100" fill="#fff"/><g class="petals"><rect x="38" y="6" width="25" height="42" rx="12" fill="#f79a1f"/><rect x="38" y="6" width="25" height="42" rx="12" fill="#ece52d" transform="rotate(45 50 50)"/><rect x="38" y="6" width="25" height="42" rx="12" fill="#a6d33b" transform="rotate(90 50 50)"/><rect x="38" y="6" width="25" height="42" rx="12" fill="#52b788" transform="rotate(135 50 50)"/><rect x="38" y="6" width="25" height="42" rx="12" fill="#5aa5dc" transform="rotate(180 50 50)"/><rect x="38" y="6" width="25" height="42" rx="12" fill="#8179c6" transform="rotate(225 50 50)"/><rect x="38" y="6" width="25" height="42" rx="12" fill="#c1639f" transform="rotate(270 50 50)"/><rect x="38" y="6" width="25" height="42" rx="12" fill="#ee4b3b" transform="rotate(315 50 50)"/></g></svg></a>
	<a class="app run" href="#" title="地图"><svg viewBox="0 0 100 100"><rect width="100" height="100" fill="#f3f2f0"/><path d="M0 0h22v26L0 44zM50 0h50v78L50 30z" fill="#4fd35c"/><path d="M60 0c2 24 18 38 40 40" fill="none" stroke="#e9e9ee" stroke-width="9"/><path d="M0 62l24-12v50H0z" fill="#ea86bd"/><path d="M62 78l30 22H55z" fill="#fbc71c"/><path d="M25 0h23v50H25z" fill="#1f6ff0"/><circle cx="39" cy="63" r="25" fill="#fff"/><circle cx="39" cy="63" r="21" fill="#1e78f0"/><path d="M39 46l12 30-12-8-12 8z" fill="#fff"/></svg></a>
	<a class="app run" href="#" title="备忘录"><svg viewBox="0 0 100 100"><rect width="100" height="100" fill="#f6f5f3"/><rect width="100" height="26" fill="#fbcb1b"/><path d="M0 30h100" stroke="#b9b5ab" stroke-width="3" stroke-dasharray="2 2"/><path d="M0 50h100M0 75h100" stroke="#d4d2ce" stroke-width="2"/></svg></a>
	<a class="app run" href="#" title="便笺"><svg viewBox="0 0 100 100"><rect width="100" height="100" fill="#d5c75e"/><path d="M0 0h100v62C98 80 82 90 66 90H20Q0 90 0 72z" fill="url(#gSticky)"/><path d="M18 30c2-10 5-16 7-12s-6 20-2 17 8-16 12-16-2 14 3 13 5-5 10-2 8 1 34 1M16 48h68M16 66h36" fill="none" stroke="#d2c35f" stroke-width="5"/></svg></a>
	<a class="app" href="#" title="Keynote"><svg viewBox="0 0 100 100"><rect width="100" height="100" fill="url(#gKey)"/><path d="M26 14h48q3 0 3 3l4 25q0 3-3 3H23q-3 0-3-3l4-25q0-3 2-3z" fill="#f4f5f7"/><path d="M27 39h46" stroke="#73767c" stroke-width="3"/><circle cx="49" cy="26" r="8" fill="#55c27d"/><path d="M49 26v-8a8 8 0 0 0-8 8z" fill="#e2504a"/><path d="M49 26v8a8 8 0 0 0 8-8z" fill="#3c8fe0"/><path d="M49 45v38" stroke="#e8eef6" stroke-width="5"/><path d="M33 84h32" stroke="#e8eef6" stroke-width="5"/></svg></a>
	<a class="app" href="#" title="Numbers"><svg viewBox="0 0 100 100"><rect width="100" height="100" fill="url(#gNum)"/><g fill="#f7f8f7"><rect x="18" y="65" width="13" height="21" rx="2"/><rect x="36" y="48" width="13" height="38" rx="2"/><rect x="53" y="15" width="13" height="71" rx="2"/><rect x="70" y="33" width="13" height="53" rx="2"/></g></svg></a>
	<a class="app free" href="#" title="词典"><svg viewBox="0 0 100 100"><path d="M9 95h21v14l-10-6-11 6z" fill="#c8322f"/><rect width="100" height="100" rx="23" fill="#67202b"/><rect x="6" width="94" height="98" rx="22" fill="#96353f"/><text x="52" y="65" font-size="50" text-anchor="middle" fill="#fbeef0" class="serif">Aa</text></svg></a>
	<a class="app" href="#" title="Pages"><svg viewBox="0 0 100 100"><rect width="100" height="100" fill="url(#gPages)"/><path d="M20 85h64" stroke="#fbc897" stroke-width="4"/><path d="M17 84l6-14L74 20c4-4 10 0 7 6L29 76z" fill="#f7f5f3"/><path d="M47 46l9 8" stroke="#8d8b89" stroke-width="2"/></svg></a>
	<a class="app run" href="#" title="QuickTime Player"><svg viewBox="0 0 100 100"><rect width="100" height="100" fill="url(#gQt)"/><path d="M70 70l20 20H72L58 78z" fill="#a2a4ab"/><circle cx="50" cy="50" r="33" fill="url(#gCyan)" stroke="url(#gRing)" stroke-width="14"/><path d="M50 50l28 28" stroke="#9a9ca3" stroke-width="15" stroke-linecap="round"/></svg></a>

	<i class="divider"></i>

	<a class="app run" href="#" title="GoodNotes"><svg viewBox="0 0 100 100"><rect width="100" height="100" fill="url(#gSil)"/><path d="M23 27h54M23 43h48M23 58h42M23 77c5 1 10-6 16-6s9 7 18 6" fill="none" stroke="#3bbdd6" stroke-width="4"/><path d="M61 78l4-22Q74 28 92 5l8 8v18Q88 52 66 74z" fill="#2a2a2c"/><path d="M85 18l14 10" stroke="#c7c7c9" stroke-width="4"/></svg></a>
	<a class="app run" href="#" title="Word"><svg viewBox="0 0 100 100"><rect width="100" height="100" fill="#fff"/><path d="M26 17h57v17H26z" fill="#41a0e6"/><path d="M26 34h57v16H26z" fill="#2b7cd3"/><path d="M26 50h57v17H26z" fill="#1a56b4"/><path d="M26 67h57v16H26z" fill="#153a80"/><rect x="9" y="31" width="38" height="38" rx="4" fill="#1b55ae"/><text x="28" y="60" font-size="28" font-weight="700" text-anchor="middle" fill="#fff">W</text></svg></a>
	<a class="app run" href="#" title="OneNote"><svg viewBox="0 0 100 100"><rect width="100" height="100" fill="#fff"/><path d="M26 17h57v66H26z" fill="#ba4be0"/><path d="M67 36h16v16H67z" fill="#a033c8"/><path d="M67 52h16v15H67z" fill="#8620b0"/><path d="M67 67h16v16H67z" fill="#66089a"/><rect x="9" y="31" width="38" height="38" rx="4" fill="#67079a"/><text x="28" y="60" font-size="28" font-weight="700" text-anchor="middle" fill="#fff">N</text></svg></a>
	<a class="app run" href="#" title="MindNode"><svg viewBox="0 0 100 100"><rect width="100" height="100" fill="#fff"/><path d="M17 17q22 10 29 32l4 38Q18 70 17 17z" fill="#5b4cab"/><path d="M56 12q18 20 12 38-8 18-18 38Q36 62 38 42q4-18 18-30z" fill="url(#gLeaf)"/><path d="M86 37q-4 34-36 51-3-44 36-51z" fill="url(#gLeaf2)"/></svg></a>
	<a class="app run" href="#" title="PowerPoint"><svg viewBox="0 0 100 100"><rect width="100" height="100" fill="#fff"/><circle cx="53" cy="50" r="33" fill="#c13b25"/><path d="M53 17a33 33 0 0 1 33 33H53z" fill="#f27a60"/><path d="M53 17a33 33 0 0 0-33 33h33z" fill="#e26044"/><rect x="12" y="31" width="39" height="38" rx="4" fill="#b8321f"/><text x="31" y="60" font-size="28" font-weight="700" text-anchor="middle" fill="#fff">P</text></svg></a>
	<a class="app free run" href="#" title="预览"><svg viewBox="0 0 100 100"><rect width="100" height="100" rx="23" fill="#f3f3f5"/><rect x="7" y="8" width="86" height="84" rx="17" fill="url(#gSky)"/><path d="M7 54h86v22H7z" fill="#2a3a66"/><path d="M7 76l24-8 30 6 32-4v6Q93 92 76 92H24Q7 92 7 76z" fill="#dbe4ec"/><path d="M12 68l14-3 10 6-14 5zM16 84l16-8 12 8z" fill="#5c6a7c"/><path d="M55 68h34l11 32q0 6-6 6H50q-6 0-6-6z" fill="#d3d6da" stroke="#55575c" stroke-width="2"/><path d="M60 74h22l8 26H54z" fill="#a3afba"/><path d="M64 92l8-12 8 14z" fill="#f2f4f6"/><rect x="51" y="49" width="42" height="22" rx="5" fill="#18181a"/><ellipse cx="72" cy="53" rx="18" ry="4" fill="#3d3d40"/></svg></a>
	<a class="app run" href="#" title="邮件"><svg viewBox="0 0 100 100"><rect width="100" height="100" fill="url(#gMail)"/><rect x="14" y="28" width="70" height="44" rx="4" fill="#f4f4f4" stroke="#bfc7d0"/><path d="M15 71l24-24M83 71L59 47M15 29l28 28q6 6 12 0l28-28" fill="none" stroke="#9b9ea3" stroke-width="2"/></svg></a>
	<a class="app run" href="#" title="zoom"><svg viewBox="0 0 100 100"><rect width="100" height="100" fill="url(#gZoom)"/><text x="50" y="57" font-size="26" font-weight="600" text-anchor="middle" fill="#fff">zoom</text></svg></a>
	<a class="app run" href="#" title="音乐"><svg viewBox="0 0 100 100"><rect width="100" height="100" fill="url(#gMusic)"/><path d="M36 24l37-8v52" fill="none" stroke="#fff" stroke-width="6"/><path d="M36 74V23M36 33l37-8" fill="none" stroke="#fff" stroke-width="7"/><ellipse cx="28" cy="75" rx="11" ry="9" fill="#fff"/><ellipse cx="65" cy="68" rx="11" ry="9" fill="#fff"/></svg></a>

	<i class="divider"></i>

	<a class="app free" href="#" title="废纸篓"><svg viewBox="0 0 100 100"><path d="M4 5h92L84 96q-1 10-12 10H28q-11 0-12-10z" fill="url(#gTrash)"/><path d="M20 25l10 70M48 28l2 70M78 24L68 94M30 40l30 20M40 80l28-16" stroke="#f2f2f4" stroke-width="4" opacity=".4"/><ellipse cx="50" cy="7" rx="46" ry="10" fill="#77777c"/><path d="M10 8l12-14 10 6 6-10 14 8 12-8 8 12 10-3 6 10q-38 16-78-1z" fill="#e3e2e2"/><path d="M24 2l8 4-4 7zM44-4l6 8-8 5zM58 0l10 6-8 6zM74 2l6 4-8 6z" fill="#3c3a40"/><path d="M34-2l8 4-6 5z" fill="#2d8f86"/><path d="M66 8l8-4 2 6z" fill="#c0563a"/></svg></a>
</footer>

</body>
</html>
```
FILE: styles.css
```css
* { box-sizing: border-box; }

html, body { margin: 0; height: 100%; }

body {
	display: flex;
	flex-direction: column;
	overflow: hidden;
	font-family: Inter, "Noto Sans CJK SC", sans-serif;
	font-size: 24px;
	line-height: 32px;
	color: #222;
	background: linear-gradient(90deg, #2b067c, #22066a 12%, #1e0469 50%, #3a00a4 70%, #3e00b4 90%, #4200cc);
}

button, select, textarea, input {
	margin: 0;
	padding: 0;
	border: 0;
	background: none;
	color: inherit;
	font: inherit;
}

a { color: inherit; text-decoration: none; }
svg { display: block; flex: none; overflow: visible; }
.defs { position: absolute; }

.wl { fill: none; stroke: #fff; stroke-width: 2; }
.gl { fill: none; stroke: #a3a3a5; stroke-width: 2; }
.bl { fill: none; stroke: #98c4dd; stroke-width: 2; }

/* menu bar */
.menubar {
	flex: none;
	display: flex;
	align-items: center;
	height: 50px;
	padding: 0 38px 2px 38px;
	font-size: 26px;
	color: #231a2a;
	background: linear-gradient(90deg, #ea90d8, #e6b4e2 32%, #e7c7e9 50%, #eac0e6 75%, #f0a8da);
}
.menus { display: flex; gap: 42px; margin-left: 40px; }
.app-name { font-weight: 700; }
.extras { display: flex; align-items: center; gap: 40px; margin-left: auto; }
.controls { display: flex; gap: 24px; margin-left: -4px; }
.clock { display: flex; gap: 18px; margin-left: -6px; font-variant-numeric: tabular-nums; }

/* window */
.window {
	position: relative;
	flex: 1;
	min-height: 0;
	display: flex;
	flex-direction: column;
	border-radius: 20px;
	background: #eae8ec;
	box-shadow: 0 0 0 1px #9c8597;
}

.titlebar {
	flex: none;
	display: grid;
	grid-template-columns: 1fr auto 1fr;
	align-items: center;
	height: 64px;
	padding: 0 24px 0 25px;
	border-radius: 20px 20px 0 0;
	background: #b0281d;
	color: #fde3e0;
}
.titlebar h1 { margin: 0; font-size: 26px; font-weight: 600; }
.title-left { display: flex; align-items: center; gap: 24px; }
.title-right { display: flex; align-items: center; justify-content: flex-end; gap: 36px; }
.lights { display: flex; gap: 14px; margin-right: 28px; }
.lights i {
	display: grid;
	place-items: center;
	width: 26px;
	height: 26px;
	border: 2px solid #8e332c;
	border-radius: 50%;
	background: #a8605a;
}
.lights .dirty::after { content: ""; width: 8px; height: 8px; border-radius: 50%; background: #5a1712; }
.autosave { display: flex; align-items: center; gap: 16px; font-size: 22px; font-weight: 500; }
.toggle {
	display: flex;
	align-items: center;
	gap: 6px;
	width: 78px;
	height: 28px;
	padding: 1px;
	border-radius: 14px;
	background: #701f1a;
	color: #fff;
	font-size: 16px;
}
.toggle::before { content: ""; width: 26px; height: 26px; border-radius: 50%; background: #fff; }
.undo { display: flex; align-items: center; gap: 16px; color: #fff; margin-right: -6px; }
.faded { opacity: .3; }

/* tabs */
.tabs {
	flex: none;
	display: flex;
	align-items: center;
	justify-content: space-between;
	height: 64px;
	padding: 0 20px 0 22px;
	background: #f4f3f4;
	font-size: 26px;
	font-weight: 500;
}
.tabs nav { display: flex; gap: 46px; }
.tabs nav a { line-height: 44px; }
.tabs nav .active { font-weight: 700; border-bottom: 6px solid #a3281f; border-radius: 3px; }
.tabs nav .tell { display: flex; align-items: center; gap: 18px; margin-left: -8px; height: 44px; }
.tab-actions { display: flex; gap: 20px; }
.tab-actions button {
	display: flex;
	align-items: center;
	justify-content: center;
	gap: 10px;
	width: 114px;
	height: 48px;
	border: 2px solid #d5d3d5;
	border-radius: 6px;
	background: #fff;
	color: #a8281d;
	font-size: 24px;
	font-weight: 700;
}

/* ribbon */
.ribbon {
	flex: none;
	display: flex;
	padding: 4px 0 16px;
	border-bottom: 2px solid #c7c4c8;
	background: linear-gradient(#f3f1f3, #f1eff2 50%, #e8e7e9);
	font-size: 21px;
	line-height: 24px;
	color: #111;
}
.group {
	display: flex;
	align-items: flex-start;
	gap: 17px;
	height: 124px;
	padding: 0 26px;
	border-right: 2px solid #cfcdd0;
}
.group:last-child { border-right: 0; }
.g-clip { gap: 15px; padding: 0 26px 0 34px; }
.g-clip .face { gap: 6px; }
.g-slides { gap: 10px; padding: 0 28px 0 20px; }
.g-font { gap: 5px; padding-left: 20px; }
.g-para { gap: 16px; padding-right: 27px; }
.g-insert { padding-right: 24px; }
.g-sens { padding-left: 34px; }
.g-sens .big { text-align: left; }
.g-design { padding-left: 22px; }
.off { color: #777; }
.off .chev { color: #a0a0a2; }
.off .dark { color: #555; }

.big { padding-top: 6px; line-height: 24px; text-align: center; white-space: nowrap; }
.face { display: flex; align-items: center; justify-content: center; gap: 10px; margin-bottom: 9px; }
.face svg + .chev { margin: 2px 0 0 2px; }

.stack { display: flex; flex-direction: column; }
.stack button { display: flex; align-items: center; gap: 12px; text-align: left; white-space: nowrap; }
.three button { height: 44px; }
.two button { height: 60px; }
.two button:first-child { height: 70px; }

.split { display: flex; height: 100px; margin-top: 2px; border-radius: 6px; overflow: hidden; }
.split .main { width: 72px; padding: 4px 5px; background: #dcdadc; }
.split .main svg { margin-bottom: auto; }
.split button { display: flex; }
.split .drop { width: 24px; padding: 32px 6px; background: #a3a2a4; }

.pick { display: grid; align-items: center; margin-top: 10px; }
.pick > * { grid-area: 1 / 1; }
.pick svg { justify-self: end; margin-right: 9px; pointer-events: none; }
.pick select {
	appearance: none;
	width: 100%;
	height: 48px;
	padding-left: 11px;
	border: 2px solid #d6d4d6;
	border-radius: 7px;
	background: #fff;
	color: #777;
	font-size: 24px;
}
.family { width: 344px; }
.size { width: 107px; }
.g-font .tools { margin-left: 5px; }

.tools { display: flex; align-items: center; gap: 20px; height: 68px; }
.tools + .tools { height: 60px; }
.tools button { display: flex; align-items: center; gap: 15px; }
.bar { width: 2px; height: 36px; margin: 0 3px; background: #cfcdd0; }

/* workspace */
.workspace { flex: 1; min-height: 0; display: flex; }
.slides {
	flex: none;
	width: 458px;
	padding: 20px 0 0 22px;
	border-right: 2px solid #bdb9bf;
	background: linear-gradient(90deg, transparent 448px, #f6f0f8 448px), linear-gradient(165deg, #e1bce7, #dfb9e5 50%, #d5b9e3);
}
.slide-row { display: flex; margin-bottom: 39px; font-size: 26px; line-height: 28px; color: #3d2a44; }
.slide-row span { width: 42px; }
.thumb {
	display: flex;
	flex-direction: column;
	width: 344px;
	height: 193px;
	border-radius: 8px;
	background: #fff;
	color: #111;
	box-shadow: 0 0 4px #b59bbb;
}
.thumb b { font-weight: 300; }
.cover { align-items: center; padding-top: 71px; }
.cover b { font-size: 21px; }
.cover small { font-size: 8px; line-height: 14px; }
.body { padding: 12px 24px; }
.body b { font-size: 15px; font-weight: 400; line-height: 30px; }
.body small { font-size: 10px; line-height: 28px; }
.current { box-shadow: 0 0 0 2px #dcb4b4, 0 0 0 8px #a3332c; }

.editor { flex: 1; min-width: 0; display: flex; flex-direction: column; }
.canvas { flex: 1; min-height: 0; display: flex; justify-content: center; padding: 51px 0; background: #ebe9ed; }
.page { height: 100%; aspect-ratio: 16 / 9; background: #fff; box-shadow: 0 0 4px #bbb, 0 6px 30px #d2d0d4; }
.notes {
	flex: none;
	height: 77px;
	padding: 14px;
	border-top: 3px solid #c7c5c8;
	background: linear-gradient(#ebe9ec, #e2e2e2);
	font-size: 26px;
	line-height: 32px;
	resize: none;
}
.notes::placeholder { color: #111; opacity: 1; }

/* status bar */
.status {
	flex: none;
	display: flex;
	align-items: center;
	height: 46px;
	padding: 0 46px 0 48px;
	border-top: 2px solid #959395;
	border-radius: 0 0 20px 20px;
	background: linear-gradient(#dadada, #b9b8b9);
	color: #4b4b4b;
}
.lang { margin-left: 42px; }
.access { display: flex; align-items: center; gap: 2px; margin-left: 38px; }
.views { display: flex; align-items: center; margin-left: auto; align-self: stretch; }
.views > button { display: flex; align-items: center; gap: 8px; margin-right: 40px; }
.modes { display: flex; align-self: stretch; margin: 0 -4px 0 -20px; }
.modes button { display: grid; place-items: center; width: 73px; }
.modes .on { background: #8d8c8d; }
.views .zoom-step { margin: 0 14px; }
.views .percent { margin: 0 40px 0 20px; }
.views button:last-child { margin-right: 0; }
.status input { appearance: none; width: 198px; height: 32px; }
.status input::-webkit-slider-runnable-track { height: 8px; border-radius: 4px; background: #868686; }
.status input::-webkit-slider-thumb {
	appearance: none;
	width: 32px;
	height: 32px;
	margin-top: -12px;
	border-radius: 50%;
	background: #f1f1f2;
	box-shadow: 0 1px 3px #666;
}

/* layout gallery, floats over ribbon and slides */
.popover {
	position: absolute;
	left: 284px;
	top: 206px;
	width: 980px;
	padding: 8px 0 4px;
	border-radius: 10px;
	background: #e9e7ea;
	box-shadow: 0 0 0 1px #a9a7ab, 0 16px 50px rgba(0, 0, 0, .35);
}
.popover h2 {
	margin: 0;
	padding: 2px 10px 0;
	border: solid #cdcbce;
	border-width: 2px 0;
	background: linear-gradient(#e0dfe0, #d9d6da);
	color: #6b696c;
	font-size: 24px;
	font-weight: 400;
	line-height: 42px;
}
.gallery { display: grid; grid-template-columns: repeat(5, 1fr); grid-auto-rows: 150px; padding-bottom: 12px; border-bottom: 4px solid #cfcdd0; }
.gallery button {
	position: relative;
	display: flex;
	flex-direction: column;
	align-items: center;
	gap: 6px;
	padding-top: 10px;
	font-size: 18px;
	line-height: 26px;
}
.gallery button > svg { width: 174px; height: 101px; background: #fff; outline: 1px solid #555; outline-offset: -1px; }
.gallery button > svg > path { fill: none; stroke: #222; stroke-dasharray: 2 2; }
.gallery use { opacity: .8; }
.gallery .hover { z-index: 1; border-radius: 8px; background: #e6bfbc; box-shadow: inset 0 0 0 2px #b9524c; }
.tip {
	position: absolute;
	left: 171px;
	top: 110px;
	padding: 0 13px;
	background: #e2dce5;
	color: #444;
	font-size: 21px;
	line-height: 36px;
	white-space: nowrap;
	box-shadow: 0 2px 10px rgba(0, 0, 0, .4);
}
.cursor { position: absolute; left: 165px; top: 73px; width: 22px; }
.commands { padding: 7px 40px 5px; }
.commands button { display: flex; align-items: center; gap: 10px; height: 48px; font-size: 28px; }

/* dock */
.dock {
	flex: none;
	align-self: center;
	display: flex;
	height: 126px;
	margin: 4px 0 10px;
	padding: 0 3px;
	border: 2px solid #9a66ee;
	border-radius: 32px;
	background: linear-gradient(90deg, #6f40c8, #6b40d2 25%, #8239f2 46%, #b034f2 68%, #a535f2 80%, #8f3cf4);
}
.app { display: flex; flex-direction: column; align-items: center; gap: 17px; width: 104px; padding-top: 17px; }
.app svg { width: 77px; height: 77px; border-radius: 18px; overflow: hidden; box-shadow: 0 1px 3px rgba(0, 0, 0, .4); }
.free svg { overflow: visible; border-radius: 0; box-shadow: none; }
.run::after { content: ""; width: 8px; height: 8px; border-radius: 50%; background: #230672; }
.divider { width: 2px; height: 94px; margin: 14px 23px; background: #5a1fb8; }
.petals rect { mix-blend-mode: multiply; opacity: .9; }
.serif { font-family: "Liberation Serif", serif; }
```
